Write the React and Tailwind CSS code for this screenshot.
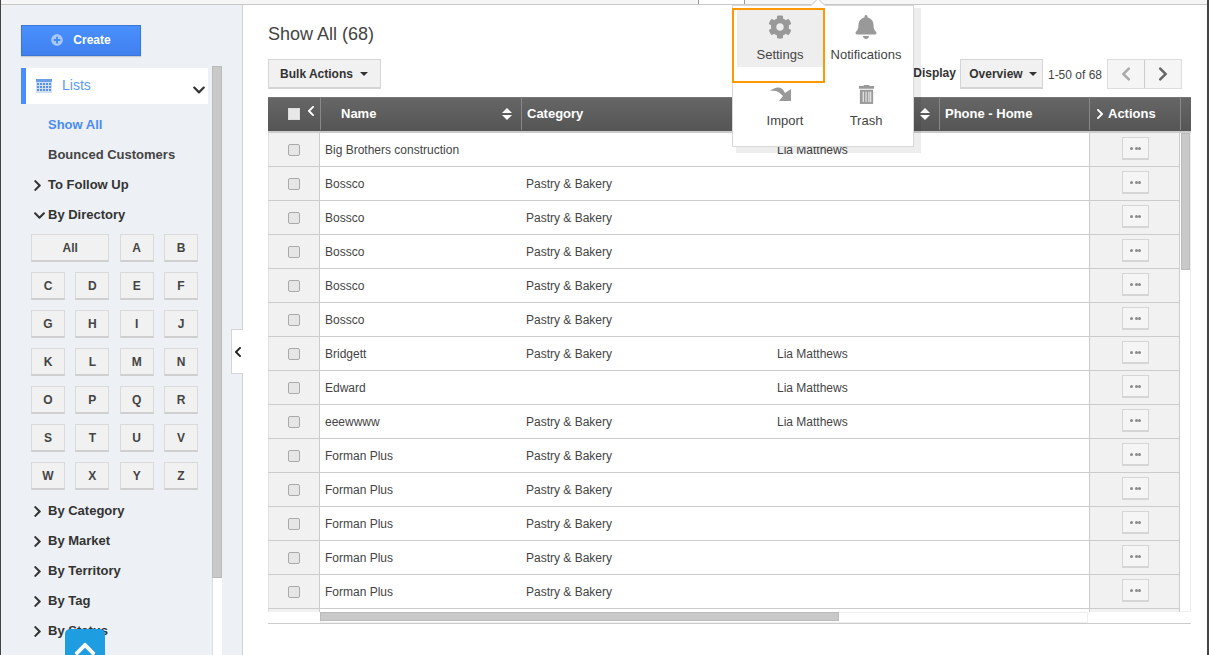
import React from "react";
import { FaCog, FaBell, FaChevronDown, FaChevronRight, FaChevronLeft, FaChevronUp, FaPlusCircle } from "react-icons/fa";

const letters = ["A","B","C","D","E","F","G","H","I","J","K","L","M","N","O","P","Q","R","S","T","U","V","W","X","Y","Z"];
const P = "Pastry & Bakery";
const L = "Lia Matthews";
const rows = [
  ["Big Brothers construction", "", L],
  ["Bossco", P, ""], ["Bossco", P, ""], ["Bossco", P, ""], ["Bossco", P, ""], ["Bossco", P, ""],
  ["Bridgett", P, L], ["Edward", "", L], ["eeewwww", P, L],
  ["Forman Plus", P, ""], ["Forman Plus", P, ""], ["Forman Plus", P, ""], ["Forman Plus", P, ""], ["Forman Plus", P, ""],
  ["", "", ""],
];

function Caret() {
  return <span className="inline-block w-0 h-0 border-x-[4px] border-x-transparent border-t-[4px] border-t-[#333]" />;
}
function Sort() {
  return (
    <span className="relative inline-block w-[10px] h-[14px] text-white">
      <span className="absolute left-0 top-[1px] w-0 h-0 border-x-[5px] border-x-transparent border-b-[5px] border-b-white" />
      <span className="absolute left-0 top-[8px] w-0 h-0 border-x-[5px] border-x-transparent border-t-[5px] border-t-white" />
    </span>
  );
}
function Check({ header }) {
  return <span className={`block w-[12px] h-[12px] border ${header ? "bg-[#e8e8e8] border-[#dddddd]" : "rounded-[2px] bg-[#e6e6e6] border-[#aaaaaa]"}`} />;
}
function NavItem({ open, children }) {
  return (
    <div className="h-[30px] flex items-center pl-[12px] text-[13px] font-bold text-[#333]">
      <span className="w-[15px] flex justify-start text-[#333]">
        {open ? <FaChevronDown size={13} /> : <FaChevronRight size={13} className="-ml-[2px]" />}
      </span>
      {children}
    </div>
  );
}
function Letter({ children, wide }) {
  return (
    <div className={`${wide ? "col-span-2" : ""} h-[28px] flex items-center justify-center bg-[#f1f1f1] border border-[#dadada] border-b-2 border-b-[#cfcfcf] text-[12px] font-bold text-[#444]`}>
      {children}
    </div>
  );
}
function MenuCell({ icon, label, className = "", labelClass = "mt-[5px]" }) {
  return (
    <div className={`flex flex-col items-center text-[13px] text-[#444] ${className}`}>
      <div className="h-[30px] flex items-center justify-center">{icon}</div>
      <div className={`leading-[16px] ${labelClass}`}>{label}</div>
    </div>
  );
}
function Dots() {
  return (
    <span className="ml-[1px] mb-[2px] w-[27px] h-[23px] flex items-center justify-center bg-[#f5f5f5] border border-[#d5d5d5] border-b-2">
      <span className="w-[3px] h-[3px] bg-[#8a8a8a] rounded-full" />
      <span className="ml-[2px] w-[3px] h-[3px] bg-[#8a8a8a] rounded-full" />
      <span className="w-[3px] h-[3px] bg-[#8a8a8a] rounded-full" />
    </span>
  );
}

export default function App() {
  return (
    <div className="relative w-[1209px] h-[655px] overflow-hidden bg-white text-[#333] font-['Liberation_Sans',Arial,sans-serif] flex flex-col border-l border-l-[#444444] border-r-2 border-r-[#444444]">
      <div className="h-[5px] shrink-0 bg-[#f6f6f6] border-b border-b-[#c8c8c8] flex">
        <div className="ml-[697px] w-[47px] h-full bg-white border-x border-x-[#999999]" />
      </div>

      <div className="flex flex-1 min-h-0">
        <aside className="relative w-[242px] shrink-0 bg-[#edf0f4] border-r border-r-[#cfcfcf] pl-[20px] pt-[20px] overflow-hidden">
          <button className="w-[120px] h-[31px] pb-[1px] flex items-center justify-center gap-[10px] bg-gradient-to-b from-[#4a90ff] to-[#3f80ee] border border-[#3a75d8] text-white text-[12px] font-bold shadow-[0_1px_1px_rgba(0,0,0,0.15)]">
            <FaPlusCircle size={12} className="text-[#a9c8f7]" />
            Create
          </button>

          <div className="mt-[10px] flex items-start">
            <div className="w-[187px] shrink-0 mt-[2px]">
              <div className="h-[36px] bg-white border-l-[5px] border-l-[#4a8cff] flex items-center pl-[10px] relative">
                <svg width="16" height="14" viewBox="0 0 16 14" className="shrink-0">
                  <rect x="0" y="0" width="16" height="14" fill="#cfe0f8" />
                  <rect x="0" y="0" width="16" height="3" fill="#6d9fe8" />
                  {[1,4,7,10,13].map((x) => [4,7,10].map((y) => <rect key={`${x}-${y}`} x={x} y={y} width="2" height="2" fill="#5a90e6" />))}
                </svg>
                <span className="ml-[10px] text-[14px] text-[#5b9bf5] -mt-[2px]">Lists</span>
                <FaChevronDown size={14} className="absolute left-[166px] top-[15px] text-[#333]" />
              </div>
              <div className="h-[30px] mt-[6px] flex items-center pl-[27px] text-[13px] font-bold text-[#4a8cf0]">Show All</div>
              <div className="h-[30px] flex items-center pl-[27px] text-[13px] font-bold text-[#444]">Bounced Customers</div>
              <NavItem>To Follow Up</NavItem>
              <NavItem open>By Directory</NavItem>
              <div className="ml-[10px] mt-[4px] w-[167px] grid grid-cols-[34px_34px_34px_34px] justify-between gap-y-[10px]">
                <Letter wide>All</Letter>
                {letters.map((l) => <Letter key={l}>{l}</Letter>)}
              </div>
              <div className="mt-[6px]">
                <NavItem>By Category</NavItem>
                <NavItem>By Market</NavItem>
                <NavItem>By Territory</NavItem>
                <NavItem>By Tag</NavItem>
                <NavItem>By Status</NavItem>
              </div>
            </div>
            <div className="ml-[4px] w-[10px] h-[600px] bg-white border-l border-l-[#dddddd] shrink-0">
              <div className="w-[10px] -ml-[1px] h-[512px] bg-[#c9c9c9] border border-[#bbbbbb]" />
            </div>
          </div>

          <div className="absolute left-[64px] top-[624px] w-[40px] h-[40px] bg-[#1e9de0] rounded-t-[5px] flex justify-center pt-[8px] text-white">
            <FaChevronUp size={24} />
          </div>
        </aside>

        <main className="flex-1 min-w-0 pl-[25px] pr-[17px]">
          <h1 className="mt-[17px] h-[24px] text-[18px] leading-[24px] font-normal text-[#444]">Show All (68)</h1>
          <div className="mt-[13px] h-[30px] flex items-center">
            <button className="w-[113px] h-[30px] pr-[1px] flex items-center justify-center gap-[7px] bg-[#f1f1f1] border border-[#d5d5d5] border-b-2 text-[12px] font-bold text-[#333]">
              Bulk Actions <Caret />
            </button>
            <div className="ml-auto flex items-center pr-[8px]">
              <span className="text-[12px] font-bold text-[#333] -mt-[3px]">Display</span>
              <button className="ml-[4px] w-[83px] h-[30px] pl-[3px] flex items-center justify-center gap-[6px] bg-[#f1f1f1] border border-[#d5d5d5] border-b-2 text-[12px] font-bold text-[#333]">
                Overview <Caret />
              </button>
              <span className="ml-[5px] mt-[1px] text-[12px] text-[#444]">1-50 of 68</span>
              <div className="ml-[5px] flex h-[30px] border border-[#dddddd] bg-[#f5f5f5]">
                <span className="w-[36px] flex items-center justify-center text-[#aaaaaa]"><FaChevronLeft size={16} /></span>
                <span className="w-[37px] flex items-center justify-center border-l border-l-[#cccccc] text-[#666666]"><FaChevronRight size={16} /></span>
              </div>
            </div>
          </div>

          <div className="mt-[8px] w-[923px]">
            <div className="h-[36px] pb-[1px] flex bg-gradient-to-b from-[#666666] to-[#555555] border-t border-t-[#777777] border-b-[2px] border-b-[#cccccc] text-white text-[13px] font-bold">
              <div className="w-[52px] flex items-center pl-[20px] relative">
                <Check header />
                <FaChevronLeft size={12} className="absolute left-[37px] top-[7px]" />
              </div>
              <div className="w-[201px] flex items-center border-l border-l-[#888888] pl-[20px] pr-[9px] justify-between"><span>Name</span><Sort /></div>
              <div className="w-[251px] flex items-center border-l border-l-[#888888] pl-[5px]">Category</div>
              <div className="w-[167px] flex items-center justify-end border-l border-l-[#888888] pl-[5px] pr-[9px]"><span className="mr-auto">Owner</span><Sort /></div>
              <div className="w-[150px] flex items-center border-l border-l-[#888888] pl-[5px]">Phone - Home</div>
              <div className="w-[91px] flex items-center border-l border-l-[#888888] pl-[4px]"><FaChevronRight size={12} className="mr-[2px]" />Actions</div>
              <div className="flex-1 border-l border-l-[#888888]" />
            </div>

            <div className="h-[479px] flex overflow-hidden">
              <div className="w-[912px] shrink-0">
                {rows.map((r, i) => (
                  <div key={i} className="h-[34px] flex text-[12px] text-[#444]">
                    <div className="w-[52px] flex items-center justify-center bg-[#f1f1f1] border-b border-b-[#cccccc] border-r border-r-[#cccccc] border-l border-l-[#e0e0e0] pr-[1px]"><Check /></div>
                    <div className="w-[201px] flex items-center pl-[5px] border-b border-b-[#cccccc]">{r[0]}</div>
                    <div className="w-[251px] flex items-center pl-[5px] border-b border-b-[#cccccc]">{r[1]}</div>
                    <div className="w-[167px] flex items-center pl-[5px] border-b border-b-[#cccccc]">{r[2]}</div>
                    <div className="w-[150px] border-b border-b-[#cccccc]" />
                    <div className="w-[91px] flex items-center justify-center bg-[#f1f1f1] border-b border-b-[#cccccc] border-x border-x-[#cccccc]">
                      <Dots />
                    </div>
                  </div>
                ))}
              </div>
              <div className="w-[10px] ml-[1px] border-r border-r-[#eeeeee] border-b border-b-[#eeeeee]">
                <div className="h-[137px] bg-[#c9c9c9] border border-[#bbbbbb]" />
              </div>
            </div>

            <div className="h-[11px] ml-[52px] w-[768px] bg-white border border-[#eeeeee]">
              <div className="w-[519px] h-full bg-[#c9c9c9] border border-[#bbbbbb] -mt-[1px] -ml-[1px]" />
            </div>
            <div className="h-0 border-t border-t-[#cccccc]" />
          </div>
        </main>
      </div>

      <div className="absolute left-[230px] top-[329px] w-[12px] h-[45px] bg-white border border-r-0 border-[#d5d5d5] flex items-center justify-center text-[#222]">
        <FaChevronLeft size={12} className="ml-[1px]" />
      </div>

      <div className="absolute left-[735px] top-[8px] w-[185px] h-[145px] bg-[rgba(0,0,0,0.07)]" />
      <div className="absolute left-[731px] top-[5px] w-[182px] h-[142px] bg-white border border-[#d8d8d8]">
        <div className="absolute left-[80px] -top-[6px] w-[10px] h-[10px] rotate-45 bg-white border-l border-t border-[#d0d0d0]" />
        <div className="grid grid-cols-[92px_88px] relative">
          <div className="relative h-[75px]">
            <div className="absolute left-[4px] top-[4px] w-[87px] h-[57px] bg-[#eeeeee]" />
            <div className="absolute -left-[1px] top-[2px] w-[93px] h-[75px] border-2 border-[#ff9900]" />
            <MenuCell className="relative pt-[6px] pl-[2px]" icon={<FaCog size={24} className="text-[#999999]" />} label="Settings" />
          </div>
          <MenuCell className="pt-[6px] pr-[6px]" icon={<FaBell size={24} className="text-[#999999]" />} label="Notifications" />
          <MenuCell className="pl-[12px] -mt-[2px]" labelClass="mt-[4px]" icon={
            <svg width="21" height="14" viewBox="0 0 21 14" className="-ml-[10px]"><path d="M0 4 C6 -1 12 -1 15 6 L21 2 L21 14 L9 14 L13 9 C9 4 5 3 0 4 Z" fill="#999999" /></svg>
          } label="Import" />
          <MenuCell className="pr-[6px] -mt-[2px]" labelClass="mt-[4px]" icon={
            <svg width="17" height="21" viewBox="0 0 18 22">
              <path d="M6 2 V1 H12 V2 H17 V5 H1 V2 Z" fill="#999999" />
              <path d="M2 6 H16 V21 H2 Z" fill="#999999" />
              {[5,8,11,13].map((x) => <rect key={x} x={x} y="8" width="1" height="11" fill="#ffffff" />)}
            </svg>
          } label="Trash" />
        </div>
      </div>
    </div>
  );
}
